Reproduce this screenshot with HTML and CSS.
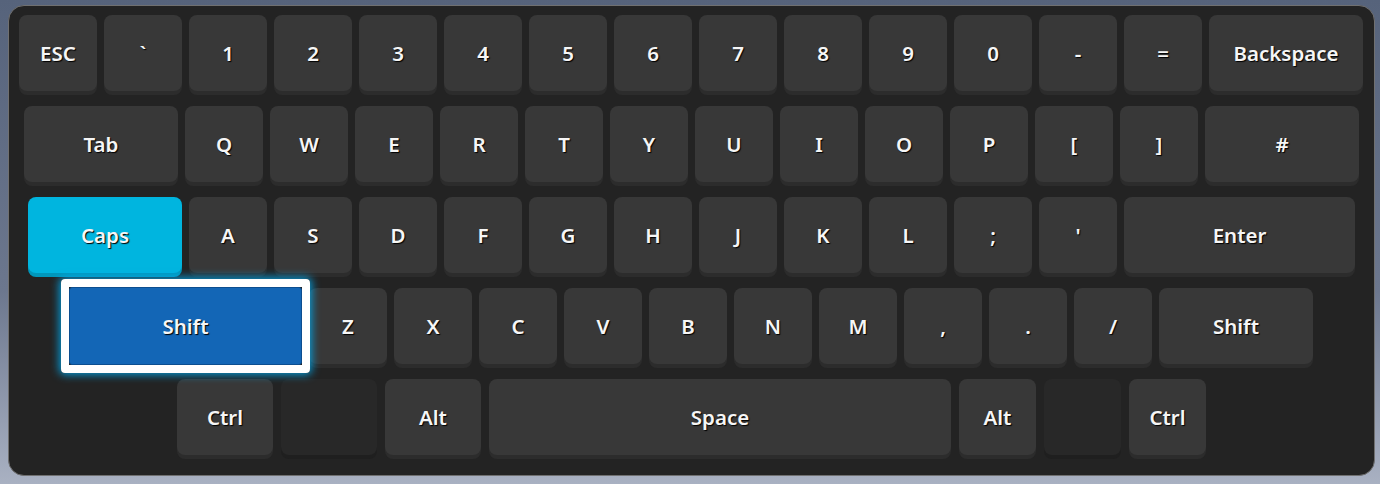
FILE: index.html
```html
<!DOCTYPE html>
<html lang="en">
<head>
    <meta charset="UTF-8">
    <title>On-screen Keyboard</title>
    <link rel="stylesheet" href="styles.css">
</head>
<body>
    <div class="keyboard">
        <div class="key-row">
            <div class="key">ESC</div>
            <div class="key">`</div>
            <div class="key">1</div>
            <div class="key">2</div>
            <div class="key">3</div>
            <div class="key">4</div>
            <div class="key">5</div>
            <div class="key">6</div>
            <div class="key">7</div>
            <div class="key">8</div>
            <div class="key">9</div>
            <div class="key">0</div>
            <div class="key">-</div>
            <div class="key">=</div>
            <div class="key key-wide">Backspace</div>
        </div>
        <div class="key-row row-tab">
            <div class="key key-wide">Tab</div>
            <div class="key">Q</div>
            <div class="key">W</div>
            <div class="key">E</div>
            <div class="key">R</div>
            <div class="key">T</div>
            <div class="key">Y</div>
            <div class="key">U</div>
            <div class="key">I</div>
            <div class="key">O</div>
            <div class="key">P</div>
            <div class="key">[</div>
            <div class="key">]</div>
            <div class="key key-wide">#</div>
        </div>
        <div class="key-row row-caps">
            <div class="key key-wide key-caps">Caps</div>
            <div class="key">A</div>
            <div class="key">S</div>
            <div class="key">D</div>
            <div class="key">F</div>
            <div class="key">G</div>
            <div class="key">H</div>
            <div class="key">J</div>
            <div class="key">K</div>
            <div class="key">L</div>
            <div class="key">;</div>
            <div class="key">'</div>
            <div class="key key-enter">Enter</div>
        </div>
        <div class="key-row row-shift">
            <div class="key key-lshift key-focus">Shift</div>
            <div class="key">Z</div>
            <div class="key">X</div>
            <div class="key">C</div>
            <div class="key">V</div>
            <div class="key">B</div>
            <div class="key">N</div>
            <div class="key">M</div>
            <div class="key">,</div>
            <div class="key">.</div>
            <div class="key">/</div>
            <div class="key key-wide">Shift</div>
        </div>
        <div class="key-row row-bottom">
            <div class="key key-mod">Ctrl</div>
            <div class="key key-mod key-blank"></div>
            <div class="key key-mod">Alt</div>
            <div class="key key-space">Space</div>
            <div class="key">Alt</div>
            <div class="key key-blank"></div>
            <div class="key">Ctrl</div>
        </div>
    </div>
</body>
</html>
```

FILE: styles.css
```css
body {
    margin: 0;
    height: 484px;
    overflow: hidden;
    background: linear-gradient(180deg, #56637b 0%, #6c778e 60%, #a9b1c2 100%);
    font-family: "Noto Sans", "Open Sans", sans-serif;
}
.keyboard {
    width: 1345px;
    margin: 5px 0 0 8px;
    padding: 9px 10px 20px 10px;
    background: #232323;
    border: 1px solid #707070;
    border-radius: 16px;
    display: flex;
    flex-direction: column;
    gap: 15px;
}
.key-row {
    display: flex;
    gap: 7px;
}
.row-tab { margin-left: 5px; }
.row-caps { margin-left: 9px; }
.row-shift { margin-left: 50px; }
.row-bottom {
    margin-left: 158px;
    gap: 8px;
}
.key {
    width: 78px;
    height: 76px;
    flex: none;
    display: flex;
    align-items: center;
    justify-content: center;
    background: #383838;
    border-radius: 8px;
    box-shadow: 0 4px 0 #2c2c2c;
    color: #f6f6f6;
    font-size: 20.5px;
    font-weight: 600;
    text-shadow: 1px 1px 1px #000;
}
.key-wide { width: 154px; }
.key-enter { width: 231px; }
.key-lshift { width: 233px; }
.key-mod { width: 96px; }
.key-space { width: 462px; }
.row-bottom .key:nth-child(n+5) { width: 77px; }
.key-blank {
    background: #282828;
    box-shadow: 0 4px 0 #1f1f1f;
}
.key-caps {
    background: #00b5df;
    box-shadow: 0 4px 0 #0197bb;
}
.key-focus {
    position: relative;
    z-index: 1;
    height: 78px;
    margin: -1px 0;
    border-radius: 3px;
    background: #1366b6;
    border: 1px solid #0c4e90;
    box-sizing: border-box;
    box-shadow: none;
}
.key-focus::before {
    content: "";
    position: absolute;
    inset: -9px;
    border: 8px solid #ffffff;
    border-radius: 4px;
    box-shadow: 0 0 8px 2px rgba(0, 170, 240, 0.85);
    pointer-events: none;
}
```
